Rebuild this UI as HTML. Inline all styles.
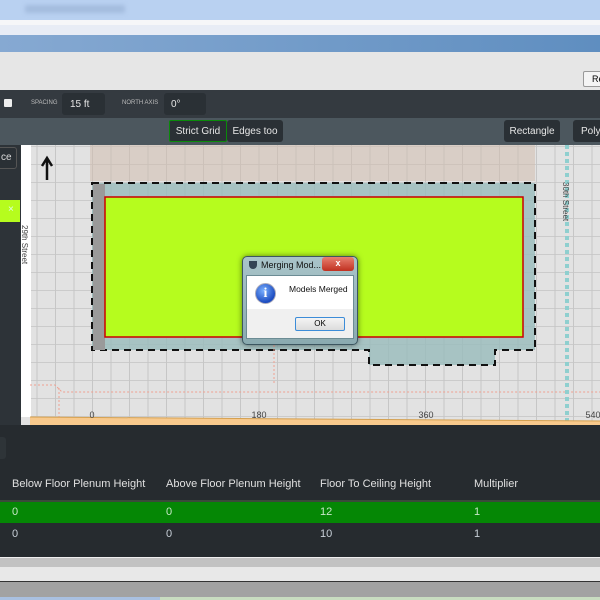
<!DOCTYPE html>
<html><head><style>
*{margin:0;padding:0;box-sizing:border-box}
body{width:600px;height:600px;overflow:hidden;background:#262b2f;font-family:"Liberation Sans",sans-serif;position:relative}
.a{position:absolute}
.btn{position:absolute;background:#2a3035;color:#e6e6e6;font-size:10px;display:flex;align-items:center;justify-content:center;border-radius:3px}
.hd{position:absolute;top:478px;color:#e0e0e0;font-size:11px}
.r1{position:absolute;top:506px;color:#c8e8c8;font-size:11px}
.r2{position:absolute;top:528px;color:#c8d0d8;font-size:11px}
</style></head><body>
<div class="a" style="left:0;top:0;width:600px;height:20px;background:#b9d1f1"></div>
<div class="a" style="left:25px;top:5px;width:100px;height:8px;background:#8fa8cc;opacity:.5;filter:blur(2px)"></div>
<div class="a" style="left:0;top:20px;width:600px;height:5px;background:#f6f6f8"></div>
<div class="a" style="left:0;top:25px;width:600px;height:10px;background:#e8ecf5"></div>
<div class="a" style="left:0;top:35px;width:600px;height:17px;background:linear-gradient(90deg,#86a9d2,#5f8ec0)"></div>
<div class="a" style="left:0;top:52px;width:600px;height:38px;background:#e6e6e6"></div>
<div class="a" style="left:583px;top:71px;width:20px;height:16px;background:#f4f4f4;border:1px solid #999;border-radius:2px;font-size:9px;padding:2px 0 0 8px">Re</div>
<div class="a" style="left:0;top:90px;width:600px;height:28px;background:#343a40"></div>
<div class="a" style="left:4px;top:99px;width:8px;height:8px;background:#eee;border-radius:1px"></div>
<div class="a" style="left:31px;top:100px;font-size:6px;color:#bbb">SPACING</div>
<div class="btn" style="left:62px;top:93px;width:43px;height:22px;justify-content:flex-start;padding-left:8px;font-size:10px">15 ft</div>
<div class="a" style="left:122px;top:100px;font-size:6px;color:#bbb">NORTH AXIS</div>
<div class="btn" style="left:164px;top:93px;width:42px;height:22px;justify-content:flex-start;padding-left:7px">0°</div>
<div class="a" style="left:0;top:118px;width:600px;height:27px;background:#4c575e"></div>
<div class="btn" style="left:169px;top:120px;width:58px;height:22px;border:1px solid #0a8a0a;border-radius:2px">Strict Grid</div>
<div class="btn" style="left:227px;top:120px;width:56px;height:22px">Edges too</div>
<div class="btn" style="left:504px;top:120px;width:56px;height:22px">Rectangle</div>
<div class="btn" style="left:573px;top:120px;width:40px;height:22px;justify-content:flex-start;padding-left:8px">Polyg</div>
<!-- canvas -->
<div class="a" style="left:21px;top:145px;width:579px;height:280px;background-color:#e2e2e2;background-image:linear-gradient(90deg,#c6c6c6 1px,transparent 1px),linear-gradient(#cbcbcb 1px,transparent 1px);background-size:18.5px 18px;background-position:-3px 1px"></div>
<div class="a" style="left:21px;top:145px;width:10px;height:272px;background:#fff"></div>
<div class="a" style="left:90px;top:145px;width:445px;height:36px;background:rgba(210,190,175,.55)"></div>
<svg class="a" style="left:0;top:0" width="600" height="600">
<path d="M92 183 H535 V350 H495 V365 H369 V350 H92 Z" fill="#98bcbc" fill-opacity=".8" stroke="#111" stroke-width="2" stroke-dasharray="7 5"/>
<rect x="93" y="184" width="12" height="166" fill="#9a9a9a"/>
<rect x="105" y="197" width="418" height="140" fill="#b6fc1e" stroke="#c00" stroke-width="1.5"/>
<path d="M30 385 H55 L62 392 H600" fill="none" stroke="#f0a090" stroke-dasharray="2 2"/>
<path d="M59 388 V417 M274 345 V385" fill="none" stroke="#f0a090" stroke-dasharray="2 2"/>
<line x1="567" y1="145" x2="567" y2="425" stroke="#8fcfcf" stroke-width="4" stroke-dasharray="4 3"/>
<path d="M30 417 L600 421 V425 H30Z" fill="#f8c98c"/>
<line x1="30" y1="417" x2="600" y2="421" stroke="#d4a050"/>
<path d="M47 180 V160 M42 166 L47 158 L52 166" stroke="#111" stroke-width="2.5" fill="none"/>
<text x="92" y="418" font-size="9" fill="#444" font-family="Liberation Sans" text-anchor="middle">0</text>
<text x="259" y="418" font-size="9" fill="#444" font-family="Liberation Sans" text-anchor="middle">180</text>
<text x="426" y="418" font-size="9" fill="#444" font-family="Liberation Sans" text-anchor="middle">360</text>
<text x="593" y="418" font-size="9" fill="#444" font-family="Liberation Sans" text-anchor="middle">540</text>
<text transform="translate(22,225) rotate(90)" font-size="8" fill="#444" font-family="Liberation Sans">29th Street</text>
<text transform="translate(563,182) rotate(90)" font-size="8" fill="#444" font-family="Liberation Sans">30th Street</text>
</svg>
<!-- left panel -->
<div class="a" style="left:0;top:145px;width:21px;height:280px;background:#2d3338"></div>
<div class="a" style="left:-10px;top:147px;width:27px;height:22px;background:#2a3035;border:1px solid #555;border-radius:3px;color:#ddd;font-size:10px;padding:4px 0 0 10px">ce</div>
<div class="a" style="left:0;top:200px;width:20px;height:22px;background:#b6fc1e;color:#dfe;font-size:10px;padding:4px 0 0 8px">×</div>
<!-- dialog -->
<div class="a" style="left:242px;top:256px;width:116px;height:89px;background:linear-gradient(#a9c4c9,#8aaab0);border:1px solid #3c5660;border-radius:5px;box-shadow:0 0 6px rgba(0,0,0,.5)"></div>
<div class="a" style="left:249px;top:261px;width:8px;height:8px;background:#345;border-radius:0 0 4px 4px"></div>
<div class="a" style="left:261px;top:260px;font-size:9px;color:#111">Merging Mod...</div>
<div class="a" style="left:322px;top:257px;width:32px;height:14px;background:linear-gradient(#e88070,#c03020);border-radius:3px;color:#fff;font-size:9px;font-weight:bold;text-align:center;line-height:13px">x</div>
<div class="a" style="left:246px;top:275px;width:108px;height:64px;background:#f0f0f0;border:1px solid #6c8c94"></div>
<div class="a" style="left:247px;top:276px;width:106px;height:33px;background:#fff"></div>
<div class="a" style="left:255px;top:283px;width:21px;height:21px;border-radius:50%;background:radial-gradient(circle at 40% 35%,#7ab0ff,#1c4cc0 70%);border:1px solid #aab;color:#fff;font-size:14px;font-weight:bold;text-align:center;line-height:20px;font-family:'Liberation Serif',serif">i</div>
<div class="a" style="left:289px;top:284px;font-size:8.5px;color:#111">Models Merged</div>
<div class="a" style="left:295px;top:317px;width:50px;height:14px;background:linear-gradient(#f4f4f4,#dcdcdc);border:1px solid #3c8cd8;border-radius:2px;font-size:8px;text-align:center;line-height:12px">OK</div>
<!-- bottom -->
<div class="a" style="left:-4px;top:437px;width:10px;height:22px;background:#2e3438;border-radius:3px"></div>
<div class="hd" style="left:12px">Below Floor Plenum Height</div>
<div class="hd" style="left:166px">Above Floor Plenum Height</div>
<div class="hd" style="left:320px">Floor To Ceiling Height</div>
<div class="hd" style="left:474px">Multiplier</div>
<div class="a" style="left:0;top:500px;width:600px;height:23px;background:#058705;border-top:2px solid #3a4a3a"></div>
<div class="r1" style="left:12px">0</div><div class="r1" style="left:166px">0</div><div class="r1" style="left:320px">12</div><div class="r1" style="left:474px">1</div>
<div class="r2" style="left:12px">0</div><div class="r2" style="left:166px">0</div><div class="r2" style="left:320px">10</div><div class="r2" style="left:474px">1</div>
<div class="a" style="left:0;top:557px;width:600px;height:10px;background:#c2c2c2;border-top:1px solid #eee"></div>
<div class="a" style="left:0;top:567px;width:600px;height:14px;background:#e8e8e8"></div>
<div class="a" style="left:0;top:581px;width:600px;height:16px;background:#a2a2a2;border-top:1px solid #333"></div>
<div class="a" style="left:0;top:597px;width:160px;height:3px;background:#a9c0e0"></div>
<div class="a" style="left:160px;top:597px;width:440px;height:3px;background:#c8dcc0"></div>
</body></html>
